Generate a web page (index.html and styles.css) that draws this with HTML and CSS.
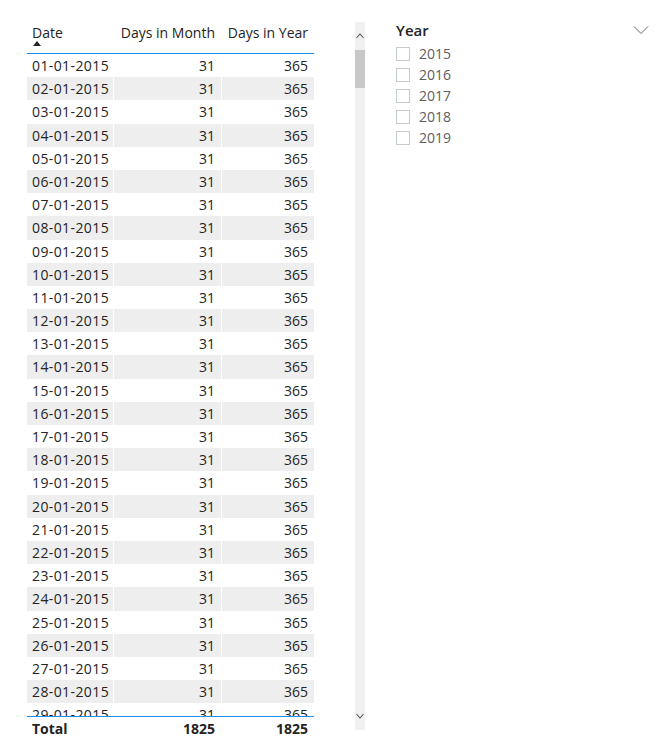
FILE: index.html
```html
<!DOCTYPE html>
<html lang="en">
<head>
  <meta charset="UTF-8" />
  <title>Days in Month</title>
  <link rel="stylesheet" href="styles.css">
</head>
<body>

<div class="page">
  <!-- Table visual -->
  <div class="table-visual">
    <div class="grid-table">
      <div class="head">
        <div class="cell">Date<span class="sort-arrow"></span></div>
        <div class="cell num">Days in Month</div>
        <div class="cell num">Days in Year</div>
      </div>
      <div class="body" id="table-body"></div>
      <div class="total">
        <div class="cell">Total</div>
        <div class="cell num">1825</div>
        <div class="cell num">1825</div>
      </div>
    </div>

    <div class="scrollbar">
      <svg class="arrow" width="10" height="8" viewBox="0 0 10 8"><path d="M1.5 6 L5 2 L8.5 6" fill="none" stroke="#555" stroke-width="1.1"/></svg>
      <div class="thumb"></div>
      <div class="track"></div>
      <svg class="arrow" width="10" height="8" viewBox="0 0 10 8"><path d="M1.5 2 L5 6 L8.5 2" fill="none" stroke="#555" stroke-width="1.1"/></svg>
    </div>
  </div>

  <!-- Year slicer -->
  <div class="slicer">
    <div class="slicer-head">
      <span class="slicer-title">Year</span>
      <svg width="16" height="10" viewBox="0 0 16 10"><path d="M1 1.5 L8 8.5 L15 1.5" fill="none" stroke="#6b6a6a" stroke-width="1"/></svg>
    </div>
    <div class="slicer-items">
      <label class="item"><span class="box"></span>2015</label>
      <label class="item"><span class="box"></span>2016</label>
      <label class="item"><span class="box"></span>2017</label>
      <label class="item"><span class="box"></span>2018</label>
      <label class="item"><span class="box"></span>2019</label>
    </div>
  </div>
</div>

<script>
  const body = document.getElementById("table-body");
  for (let d = 1; d <= 29; d++) {
    const row = document.createElement("div");
    row.className = "row" + (d % 2 === 0 ? " shaded" : "");
    const day = String(d).padStart(2, "0");
    row.innerHTML = `
      <div class="cell date">${day}-01-2015</div>
      <div class="cell num">31</div>
      <div class="cell num">365</div>
    `;
    body.appendChild(row);
  }
</script>

</body>
</html>
```

FILE: styles.css
```css
body {
  margin: 0;
  background: white;
  font-family: 'Open Sans', sans-serif;
  color: #252423;
}

.page {
  display: flex;
  align-items: flex-start;
  padding: 22px 0 0 27px;
}

.table-visual {
  display: flex;
  gap: 41px;
}

.grid-table {
  width: 287px;
  font-size: 14px;
}

.head,
.row,
.total {
  display: grid;
  grid-template-columns: 86px 107px 92px;
  column-gap: 1px;
}

.cell {
  padding: 0 6px 0 5px;
  white-space: nowrap;
  position: relative;
}

.num {
  text-align: right;
}

.date {
  letter-spacing: 0.4px;
}

.head {
  height: 31px;
  border-bottom: 1px solid #1a8fe8;
  color: #252423;
}

.head .cell {
  padding-top: 1px;
}

.sort-arrow {
  position: absolute;
  left: 6px;
  top: 19px;
  width: 0;
  height: 0;
  border-left: 4px solid transparent;
  border-right: 4px solid transparent;
  border-bottom: 5px solid #252423;
}

.body {
  height: 662px;
  overflow: hidden;
}

.row {
  height: 23.2px;
  line-height: 23.2px;
}

.row.shaded .cell {
  background: #eeeeee;
}

.total {
  border-top: 1px solid #1a8fe8;
  height: 24px;
  line-height: 24px;
  font-weight: bold;
  color: #252423;
}

.scrollbar {
  width: 10px;
  height: 708px;
  background: #f0f0f0;
  display: flex;
  flex-direction: column;
  align-items: center;
}

.scrollbar .arrow {
  margin: 10px 0;
}

.thumb {
  width: 10px;
  height: 38px;
  background: #c8c8c8;
}

.track {
  flex: 1;
}

.slicer {
  margin-left: 31px;
  margin-top: -1px;
  width: 253px;
}

.slicer-head {
  display: flex;
  justify-content: space-between;
  align-items: center;
  height: 18px;
}

.slicer-title {
  font-size: 15px;
  font-weight: 600;
  color: #252423;
}

.slicer-items {
  margin-top: 4px;
  display: flex;
  flex-direction: column;
}

.item {
  display: flex;
  align-items: center;
  gap: 9px;
  height: 21px;
  font-size: 14px;
  color: #605e5c;
}

.box {
  width: 12px;
  height: 12px;
  border: 1px solid #c4ccc6;
}
```
